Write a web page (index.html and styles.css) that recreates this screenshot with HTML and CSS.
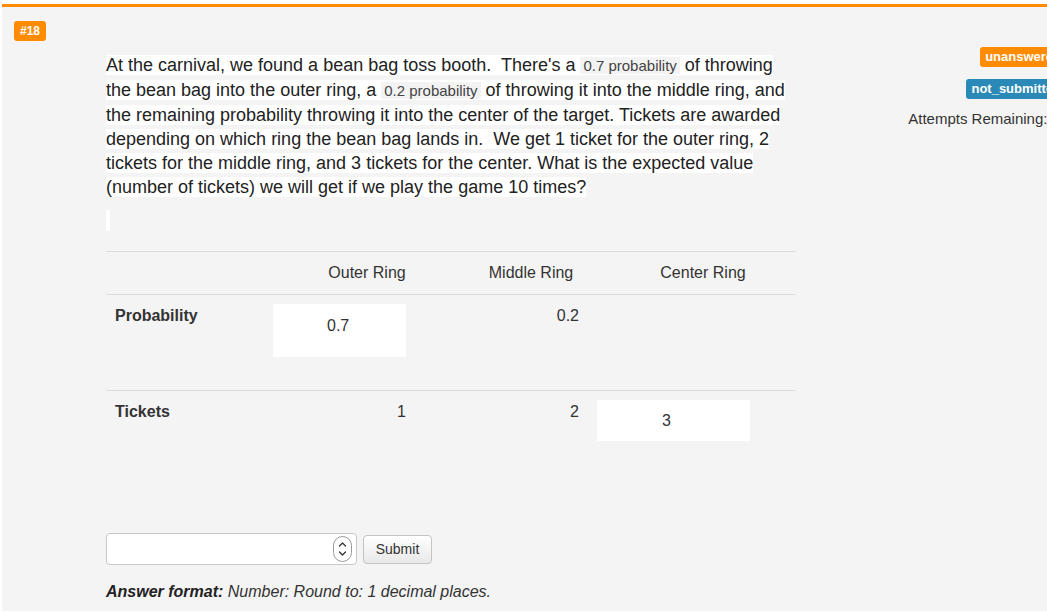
FILE: index.html
```html
<!DOCTYPE html>
<html>
<head>
<meta charset="utf-8">
<link rel="stylesheet" href="styles.css">
</head>
<body>
<div class="page">
  <div class="top"><span class="num">#18</span></div>
  <div class="row">
    <div class="main">
      <p class="q"><span class="hl">At the carnival, we found a bean bag toss booth.&nbsp; There's a <span class="pv">0.7 probability</span> of throwing the bean bag into the outer ring, a <span class="pv">0.2 probability</span> of throwing it into the middle ring, and the remaining probability throwing it into the center of the target. Tickets are awarded depending on which ring the bean bag lands in.&nbsp; We get 1 ticket for the outer ring, 2 tickets for the middle ring, and 3 tickets for the center. What is the expected value (number of tickets) we will get if we play the game 10 times?</span></p>
      <div class="cursor"></div>
      <div class="tbl">
        <div class="thead">
          <div class="th"></div>
          <div class="th">Outer Ring</div>
          <div class="th">Middle Ring</div>
          <div class="th">Center Ring</div>
        </div>
        <div class="tr">
          <div class="td label">Probability</div>
          <div class="td"><div class="box box1">0.7</div></div>
          <div class="td num-r">0.2</div>
          <div class="td"></div>
        </div>
        <div class="tr">
          <div class="td label">Tickets</div>
          <div class="td num-r">1</div>
          <div class="td num-r">2</div>
          <div class="td"><div class="box box2">3</div></div>
        </div>
      </div>
      <div class="answer">
        <div class="input">
          <span class="spin">
            <svg width="19" height="26" viewBox="0 0 19 26">
              <rect x="0.5" y="0.5" width="18" height="25" rx="9" ry="9" fill="#fff" stroke="#9a9a9a"/>
              <path d="M6.5 10 L9.5 7 L12.5 10" fill="none" stroke="#333" stroke-width="1.3" stroke-linecap="round" stroke-linejoin="round"/>
              <path d="M6.5 16 L9.5 19 L12.5 16" fill="none" stroke="#333" stroke-width="1.3" stroke-linecap="round" stroke-linejoin="round"/>
            </svg>
          </span>
        </div>
        <button class="submit">Submit</button>
      </div>
      <p class="fmt"><b>Answer format:</b> Number: Round to: 1 decimal places.</p>
    </div>
    <div class="side">
      <span class="badge orange">unanswered</span>
      <span class="badge blue">not_submitted</span>
      <div class="attempts">Attempts Remaining: 1</div>
    </div>
  </div>
</div>
</body>
</html>
```

FILE: styles.css
```css
html, body {
  margin: 0;
  padding: 0;
  background: #fff;
  overflow: hidden;
}
body {
  font-family: "Liberation Sans", Arial, Helvetica, sans-serif;
  color: #333;
}
.page {
  margin: 4px 0 0 2px;
  width: 1064px;
  height: 604px;
  border-top: 3px solid #ff8c00;
  background: #f4f4f4;
}
.top {
  padding: 14px 0 0 12px;
  height: 20px;
}
.num {
  display: inline-block;
  background: #ff8c00;
  color: #fff;
  font-weight: bold;
  font-size: 12px;
  line-height: 20px;
  height: 20px;
  padding: 0 6px;
  border-radius: 3px;
  vertical-align: top;
}
.row {
  display: flex;
  padding-left: 104px;
}
.main {
  width: 690px;
  flex: 0 0 690px;
}
.q {
  margin: 12px 0 0 0;
  font-size: 18px;
  line-height: 24px;
  color: #222;
}
.hl {
  background: #fff;
}
.pv {
  font-size: 15px;
  color: #444;
  background: #f3f3f3;
  padding: 0 3px;
}
.cursor {
  margin-top: 11px;
  width: 4px;
  height: 21px;
  background: #fff;
}
.tbl {
  margin-top: 20px;
  width: 690px;
}
.thead {
  display: grid;
  grid-template-columns: 176px 170px 158px 186px;
  border-top: 1px solid #ddd;
}
.th {
  height: 42px;
  line-height: 41px;
  text-align: center;
  font-size: 16px;
  color: #333;
}
.tr {
  display: grid;
  grid-template-columns: 159px 149px 173px 209px;
  border-top: 1px solid #ddd;
  height: 95px;
}
.td {
  padding: 9px 8px;
  font-size: 16px;
  line-height: 23px;
  color: #333;
}
.label {
  font-weight: bold;
  padding-left: 9px;
}
.num-r {
  text-align: right;
}
.box {
  background: #fff;
  line-height: 20px;
  box-sizing: border-box;
}
.box1 {
  width: 133px;
  height: 53px;
  padding: 12px 0 0 54px;
}
.box2 {
  margin-left: 2px;
  width: 153px;
  height: 41px;
  padding: 11px 0 0 65px;
}
.answer {
  margin-top: 47px;
  display: flex;
  align-items: center;
  gap: 6px;
}
.input {
  width: 251px;
  height: 32px;
  box-sizing: border-box;
  background: #fff;
  border: 1px solid #c8c8c8;
  border-radius: 4px;
  display: flex;
  align-items: center;
  justify-content: flex-end;
  padding-right: 4px;
}
.spin {
  display: block;
  width: 19px;
  height: 26px;
}
.spin svg {
  display: block;
}
.submit {
  width: 69px;
  height: 29px;
  box-sizing: border-box;
  font-family: "Liberation Sans", Arial, Helvetica, sans-serif;
  font-size: 14px;
  color: #333;
  background: linear-gradient(#ffffff, #e8e8e8);
  border: 1px solid #c4c4c4;
  border-radius: 4px;
  padding: 0;
}
.fmt {
  margin: 15px 0 0 0;
  font-size: 16px;
  line-height: 23px;
  font-style: italic;
  color: #333;
}
.fmt b {
  color: #222;
}
.side {
  margin-left: auto;
  width: 200px;
  flex: 0 0 200px;
  display: flex;
  flex-direction: column;
  align-items: flex-end;
  padding-top: 6px;
}
.badge {
  display: block;
  color: #fff;
  font-weight: bold;
  font-size: 13px;
  line-height: 20px;
  height: 20px;
  padding: 0 5px;
  border-radius: 3px;
}
.orange {
  background: #ff8c00;
}
.blue {
  margin-top: 12px;
  background: #2a89b6;
}
.attempts {
  margin-top: 9px;
  margin-right: 6px;
  font-size: 15px;
  line-height: 21px;
  color: #333;
  white-space: nowrap;
}
```
